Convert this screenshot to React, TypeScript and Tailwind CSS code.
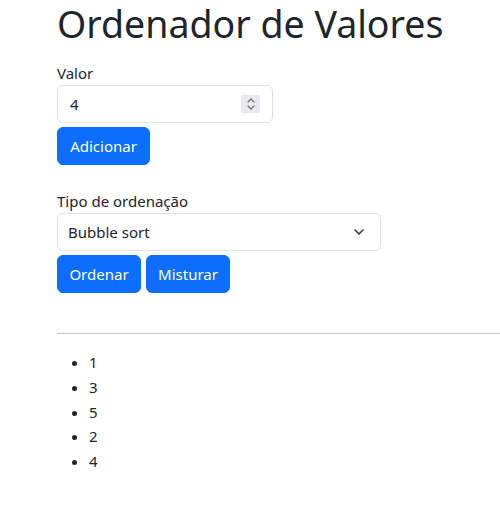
import React from "react";

function Spinner() {
  return (
    <div className="w-[19px] h-[18px] bg-[#e9e9ed] flex items-center justify-center">
      <svg width="10" height="14" viewBox="0 0 10 14" fill="none" stroke="#6b6b6b" strokeWidth="1.1" strokeLinecap="round" strokeLinejoin="round">
        <path d="M2 5 L5 2 L8 5" />
        <path d="M2 9 L5 12 L8 9" />
      </svg>
    </div>
  );
}

function Chevron() {
  return (
    <svg width="10" height="6" viewBox="0 0 10 6" fill="none" stroke="#343a40" strokeWidth="1.6" strokeLinecap="round" strokeLinejoin="round">
      <path d="M1 1l4 4 4-4" />
    </svg>
  );
}

export default function App() {
  const items = [1, 3, 5, 2, 4];
  return (
    <div className="min-h-[524px] bg-white pl-[57px] text-[#212529] font-['Noto_Sans',sans-serif] text-[15px] leading-6">
      <h1 className="text-[37.5px] leading-[47px] font-normal">Ordenador de Valores</h1>
      <div className="mt-[14px] h-6">Valor</div>
      <div className="w-[216px] h-[38px] border border-[#dee2e6] rounded-[6px] flex items-center justify-between pl-3 pr-3">
        <span>4</span>
        <Spinner />
      </div>
      <button className="mt-1 w-[93px] h-[38px] bg-[#0d6efd] text-white rounded-[6px] border border-[#0d6efd]">
        Adicionar
      </button>
      <div className="mt-6 h-6">Tipo de ordenação</div>
      <div className="w-[324px] h-[38px] border border-[#dee2e6] rounded-[6px] flex items-center justify-between pl-[10px] pr-4">
        <span>Bubble sort</span>
        <Chevron />
      </div>
      <div className="mt-1 flex gap-[5px]">
        <button className="w-[84px] h-[38px] bg-[#0d6efd] text-white rounded-[6px] border border-[#0d6efd]">
          Ordenar
        </button>
        <button className="w-[84px] h-[38px] bg-[#0d6efd] text-white rounded-[6px] border border-[#0d6efd]">
          Misturar
        </button>
      </div>
      <hr className="mt-10 border-0 border-t border-[#c8c9ca]" />
      <ul className="mt-4 pl-8 list-disc">
        {items.map((n, i) => (
          <li key={i} className="leading-[24.75px]">
            {n}
          </li>
        ))}
      </ul>
    </div>
  );
}
